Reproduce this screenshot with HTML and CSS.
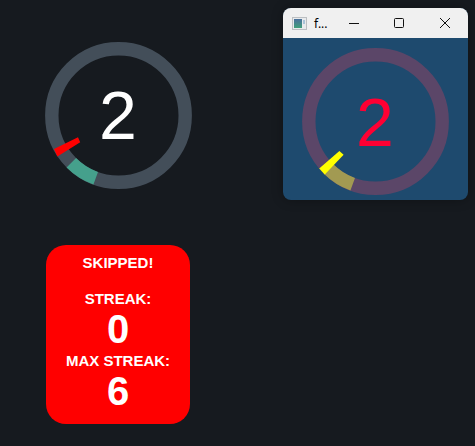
FILE: index.html
```html
<!DOCTYPE html>
<html>
<head>
  <meta charset="UTF-8">
  <title>Streak</title>
  <link rel="stylesheet" href="styles.css">
</head>
<body>
  <div class="main">
    <svg class="ring" width="147" height="147" viewBox="0 0 147 147">
      <circle class="track" cx="73.5" cy="73.5" r="66.7"></circle>
      <path class="zone" d="M50.7 136.2 A66.7 66.7 0 0 1 26.3 120.7"></path>
      <polygon class="needle" points="9,107 12.4,114.5 35.2,100.3 33,95.3"></polygon>
      <text class="count" x="73" y="96.5">2</text>
    </svg>

    <div class="card">
      <div class="msg">SKIPPED!</div>
      <div class="label first">STREAK:</div>
      <div class="num">0</div>
      <div class="label">MAX STREAK:</div>
      <div class="num">6</div>
    </div>
  </div>

  <!-- preview window -->
  <div class="window">
    <div class="titlebar">
      <svg class="app-icon" width="15" height="13" viewBox="0 0 15 13">
        <defs>
          <linearGradient id="pane" x1="0" y1="0" x2="0" y2="1">
            <stop offset="0" stop-color="#4a6f9c"></stop>
            <stop offset="1" stop-color="#3fa07a"></stop>
          </linearGradient>
        </defs>
        <rect x="0.5" y="0.5" width="14" height="12" fill="#e8eaec" stroke="#bcbfc2"></rect>
        <rect x="2" y="2" width="8" height="9" fill="url(#pane)"></rect>
        <rect x="11" y="3" width="2" height="4" fill="#a9c4d8"></rect>
      </svg>
      <span class="title">f...</span>
      <svg class="ctrl ctrl-min" width="10" height="10" viewBox="0 0 10 10">
        <line x1="0" y1="5.5" x2="10" y2="5.5"></line>
      </svg>
      <svg class="ctrl ctrl-max" width="10" height="10" viewBox="0 0 10 10">
        <rect x="0.5" y="0.5" width="9" height="9" rx="1"></rect>
      </svg>
      <svg class="ctrl ctrl-close" width="10" height="10" viewBox="0 0 10 10">
        <path d="M0 0 L10 10 M10 0 L0 10"></path>
      </svg>
    </div>
    <div class="window-body">
      <svg class="ring ring-alt" width="147" height="147" viewBox="0 0 147 147">
        <circle class="track" cx="73.5" cy="73.5" r="66.7"></circle>
        <path class="zone" d="M50.7 136.2 A66.7 66.7 0 0 1 26.3 120.7"></path>
        <polygon class="needle" points="17.2,120.6 22.8,126.4 41.6,106.8 37.4,103"></polygon>
        <text class="count" x="73" y="97.5">2</text>
      </svg>
    </div>
  </div>
</body>
</html>
```

FILE: styles.css
```css
body {
  margin: 0;
  width: 475px;
  height: 446px;
  overflow: hidden;
  position: relative;
  background-color: #161a1f;
  font-family: "Liberation Sans", Arial, sans-serif;
}

.main {
  display: flex;
  flex-direction: column;
  align-items: flex-start;
  gap: 56px;
  padding: 41.5px 0 0 44.5px;
}

/* Кольцо */
.ring {
  display: block;
}

.ring .track {
  fill: none;
  stroke: #434e59;
  stroke-width: 13.4;
}

.ring .zone {
  fill: none;
  stroke: #45a08c;
  stroke-width: 13.4;
}

.ring .needle {
  fill: #ff0000;
}

.ring .count {
  fill: #fff;
  font-size: 68px;
  text-anchor: middle;
}

.ring-alt .track {
  stroke: #5b4668;
}

.ring-alt .zone {
  stroke: #a29a52;
}

.ring-alt .needle {
  fill: #ffff00;
}

.ring-alt .count {
  fill: #ff0033;
}

/* Карточка */
.card {
  width: 144px;
  height: 179px;
  margin-left: 1.5px;
  box-sizing: border-box;
  padding-top: 9px;
  background-color: #ff0000;
  border-radius: 20px;
  color: #fff;
  text-align: center;
  font-weight: bold;
}

.msg, .label {
  font-size: 15px;
  line-height: 18px;
}

.label.first {
  margin-top: 18px;
}

.num {
  margin: -1px 0 1px;
  font-size: 40px;
  line-height: 44px;
}

/* Окно */
.window {
  position: absolute;
  left: 283px;
  top: 8px;
  width: 185px;
  height: 192px;
  border-radius: 8px;
  overflow: hidden;
  background-color: #1e4a6e;
  box-shadow: 0 0 12px rgba(0, 0, 0, 0.3);
}

.titlebar {
  display: flex;
  align-items: center;
  height: 30px;
  padding-left: 9px;
  background-color: #f0f0f0;
}

.title {
  margin-left: 7px;
  font-family: "Noto Sans", sans-serif;
  font-size: 12px;
  color: #000;
  width: 35px;
}

.ctrl {
  fill: none;
  stroke: #111;
  stroke-width: 1;
}

.ctrl-max {
  margin-left: 35px;
}

.ctrl-close {
  margin-left: 36px;
}

.window-body {
  display: flex;
  justify-content: center;
  padding-top: 9.5px;
}
```
